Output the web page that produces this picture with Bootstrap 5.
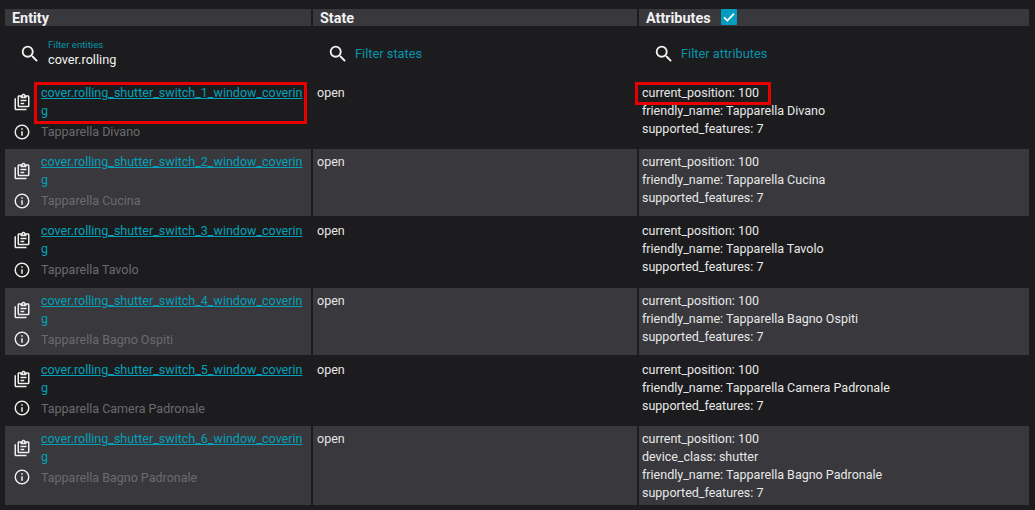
<!DOCTYPE html>
<html lang="it">
<head>
<meta charset="utf-8">
<title>Entities</title>
<link href="https://cdn.jsdelivr.net/npm/bootstrap@5.3.0/dist/css/bootstrap.min.css" rel="stylesheet">
<style>
html,body{height:100%;overflow:hidden}
body{background:#1c1c1e;color:#e6e6e6;font:12.5px/18px Roboto,sans-serif;padding:9px 6px 0 5px}
.dev-grid{display:flex;flex-direction:column;width:1024px}
.dev-row{display:flex;gap:2px;margin-bottom:2px;min-height:67.2px}
.dev-row.band>div{background:#38383d}
.col-entity{width:306px;flex:none}
.col-state{width:324px;flex:none}
.col-attr{flex:1 1 0;min-width:0}
.head-row{min-height:17px;margin-bottom:0}
.head-row>div{background:#38383d;height:17px;padding:2px 7px 0;font-weight:700;font-size:14.4px;line-height:18px;color:#f2f2f2;display:flex;align-items:center}
.tick{width:16px;height:16px;background:#039bc0;border-radius:1px;margin:0 0 0 10px;flex:none;display:block;position:relative;top:-2px}
.filter-row{height:54px;margin-bottom:0;min-height:54px}
.filter-row>div{display:flex;align-items:center;gap:6px;padding:1px 0 0 14px}
.filter-row svg{width:22px;height:22px;fill:#f2f2f2;flex:none}
.ph{color:#0a93ad;font-size:12.8px}
.flt-txt{margin-left:1px}
.flt-label{color:#0a93ad;font-size:9.6px;line-height:11px;display:block}
.flt-val{color:#f2f2f2;font-size:12.7px;line-height:16px;display:block;margin-top:2px}
.ent{display:flex;padding:4px 4px 0 7.5px}
.ic-col{width:28.5px;flex:none;display:flex;flex-direction:column;align-items:flex-start;padding-top:9px}
.ic-col svg{width:18px;height:18px;fill:#efefef;flex:none}
.ic-col svg+svg{margin-top:11.5px}
.ent-txt{min-width:0;flex:1}
.ent-link{display:block;color:#03a1ba;text-decoration:underline;word-break:break-all;width:263px}
.marked{position:relative}
.marked::after{content:"";position:absolute;left:-7px;right:-3px;top:-2px;bottom:-4px;border:3px solid #e80000}
.ent-name{color:#6b6b6f;line-height:18px;margin-top:3px}
.st{padding:4px}
.at{padding:4px 3px 2px}
.at span.line{display:block;color:#e8e8e8}
.at .mark-line{display:inline-block;position:relative}
.at .mark-line::after{content:"";position:absolute;left:-7px;right:-12px;top:-2px;bottom:-3px;border:3px solid #e80000}
.last-row{min-height:79px;margin-bottom:0}
</style>
</head>
<body>
<div class="dev-grid">
  <div class="dev-row head-row">
    <div class="col-entity">Entity</div>
    <div class="col-state">State</div>
    <div class="col-attr">Attributes
      <svg class="tick" viewBox="0 0 16 16"><path d="M3 8.4 6.4 11.6 13 4.6" fill="none" stroke="#fff" stroke-width="1.8"/></svg>
    </div>
  </div>
  <div class="dev-row filter-row">
    <div class="col-entity">
      <svg viewBox="0 0 24 24"><path d="M9.5,3A6.5,6.5 0 0,1 16,9.5C16,11.11 15.41,12.59 14.44,13.73L14.71,14H15.5L20.5,19L19,20.5L14,15.5V14.71L13.73,14.44C12.59,15.41 11.11,16 9.5,16A6.5,6.5 0 0,1 3,9.5A6.5,6.5 0 0,1 9.5,3M9.5,5C7,5 5,7 5,9.5C5,12 7,14 9.5,14C12,14 14,12 14,9.5C14,7 12,5 9.5,5Z"/></svg>
      <div class="flt-txt"><span class="flt-label">Filter entities</span><span class="flt-val">cover.rolling</span></div>
    </div>
    <div class="col-state">
      <svg viewBox="0 0 24 24"><path d="M9.5,3A6.5,6.5 0 0,1 16,9.5C16,11.11 15.41,12.59 14.44,13.73L14.71,14H15.5L20.5,19L19,20.5L14,15.5V14.71L13.73,14.44C12.59,15.41 11.11,16 9.5,16A6.5,6.5 0 0,1 3,9.5A6.5,6.5 0 0,1 9.5,3M9.5,5C7,5 5,7 5,9.5C5,12 7,14 9.5,14C12,14 14,12 14,9.5C14,7 12,5 9.5,5Z"/></svg>
      <span class="ph">Filter states</span>
    </div>
    <div class="col-attr">
      <svg viewBox="0 0 24 24"><path d="M9.5,3A6.5,6.5 0 0,1 16,9.5C16,11.11 15.41,12.59 14.44,13.73L14.71,14H15.5L20.5,19L19,20.5L14,15.5V14.71L13.73,14.44C12.59,15.41 11.11,16 9.5,16A6.5,6.5 0 0,1 3,9.5A6.5,6.5 0 0,1 9.5,3M9.5,5C7,5 5,7 5,9.5C5,12 7,14 9.5,14C12,14 14,12 14,9.5C14,7 12,5 9.5,5Z"/></svg>
      <span class="ph">Filter attributes</span>
    </div>
  </div>
  <div id="rows"></div>
</div>
<script>
var data=[["1","Tapparella Divano",0],["2","Tapparella Cucina",0],["3","Tapparella Tavolo",0],["4","Tapparella Bagno Ospiti",0],["5","Tapparella Camera Padronale",0],["6","Tapparella Bagno Padronale",1]];
var clip='<svg viewBox="0 0 24 24"><path d="M4 7V21H18V23H4C2.9 23 2 22.1 2 21V7H4M20 3C21.1 3 22 3.9 22 5V17C22 18.1 21.1 19 20 19H8C6.9 19 6 18.1 6 17V5C6 3.9 6.9 3 8 3H11.18C11.6 1.84 12.7 1 14 1C15.3 1 16.4 1.84 16.82 3H20M14 3C13.45 3 13 3.45 13 4C13 4.55 13.45 5 14 5C14.55 5 15 4.55 15 4C15 3.45 14.55 3 14 3M10 7V5H8V17H20V5H18V7H10M15 15H10V13H15V15M18 11H10V9H18V11Z"/></svg>';
var info='<svg viewBox="0 0 24 24"><path d="M11,9H13V7H11M12,20C7.59,20 4,16.41 4,12C4,7.59 7.59,4 12,4C16.41,4 20,7.59 20,12C20,16.41 16.41,20 12,20M12,2A10,10 0 0,0 2,12A10,10 0 0,0 12,22A10,10 0 0,0 22,12A10,10 0 0,0 12,2M11,17H13V11H11V17Z"/></svg>';
var h='';
data.forEach(function(d,i){
  var first=i===0;
  h+='<div class="dev-row'+(i%2?' band':'')+(d[2]?' last-row':'')+'">'
  +'<div class="col-entity ent"><div class="ic-col">'+clip+info+'</div><div class="ent-txt">'
  +'<a href="#" class="ent-link'+(first?' marked':'')+'">cover.rolling_shutter_switch_'+d[0]+'_window_covering</a>'
  +'<div class="ent-name">'+d[1]+'</div></div></div>'
  +'<div class="col-state st">open</div>'
  +'<div class="col-attr at"><span class="line">'+(first?'<span class="mark-line">current_position: 100</span>':'current_position: 100')+'</span>'
  +(d[2]?'<span class="line">device_class: shutter</span>':'')
  +'<span class="line">friendly_name: '+d[1]+'</span><span class="line">supported_features: 7</span></div></div>';
});
document.getElementById('rows').innerHTML=h;
</script>
<script src="https://cdn.jsdelivr.net/npm/bootstrap@5.3.0/dist/js/bootstrap.bundle.min.js"></script>
</body>
</html>
